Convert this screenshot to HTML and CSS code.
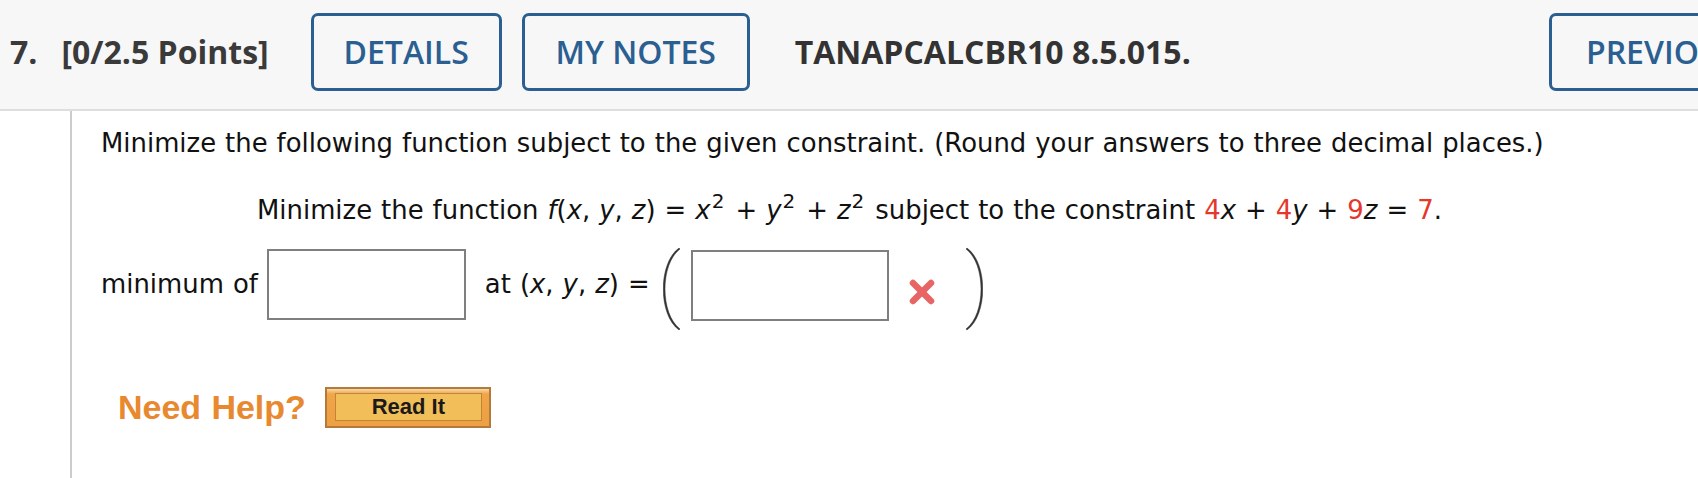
FILE: index.html
```html
<!DOCTYPE html>
<html lang="en">
<head>
<meta charset="utf-8">
<title>Question 7</title>
<link rel="stylesheet" href="styles.css">
</head>
<body>
<div class="page">
  <header class="qhead">
    <span class="qnum">7.</span>
    <span class="points">[0/2.5 Points]</span>
    <button class="hbtn btn-details">DETAILS</button>
    <button class="hbtn btn-notes">MY NOTES</button>
    <span class="qtitle">TANAPCALCBR10 8.5.015.</span>
    <button class="hbtn btn-prev">PREVIOUS ANSWERS</button>
  </header>
  <main class="qbody">
    <p class="intro">Minimize the following function subject to the given constraint. (Round your answers to three decimal places.)</p>
    <p class="problem">Minimize the function <i>f</i>(<i>x</i>, <i>y</i>, <i>z</i>) = <i>x</i><sup>2</sup> + <i>y</i><sup>2</sup> + <i>z</i><sup>2</sup> subject to the constraint <span class="red">4</span><i>x</i> + <span class="red">4</span><i>y</i> + <span class="red">9</span><i>z</i> = <span class="red">7</span>.</p>
    <div class="answers">
      <span class="lbl">minimum of</span>
      <input class="ans ans-min" type="text">
      <span class="lbl lbl-at">at (<i>x</i>, <i>y</i>, <i>z</i>) =</span>
      <svg class="paren" width="18" height="84" viewBox="0 0 18 84"><path d="M16 1 C -5 16 -5 68 16 83 L17 82 C -3 67 -3 17 17 2 Z" fill="#333333" stroke="#333333" stroke-width="0.5" stroke-linejoin="round"/></svg>
      <input class="ans ans-pt" type="text">
      <svg class="xmark" width="28" height="28" viewBox="0 0 28 28"><g stroke="#e65858" stroke-width="6.5" stroke-linecap="round" opacity="0.92"><line x1="5" y1="5" x2="23" y2="23"/><line x1="23" y1="5" x2="5" y2="23"/></g></svg>
      <svg class="paren paren-r" width="18" height="84" viewBox="0 0 18 84"><path d="M2 1 C 23 16 23 68 2 83 L1 82 C 21 67 21 17 1 2 Z" fill="#333333" stroke="#333333" stroke-width="0.5" stroke-linejoin="round"/></svg>
    </div>
    <div class="help">
      <span class="need">Need Help?</span>
      <button class="readit"><span class="readit-inner">Read It</span></button>
    </div>
  </main>
</div>
</body>
</html>
```
FILE: styles.css
```css
html, body {
  margin: 0;
  padding: 0;
  overflow: hidden;
  background: #ffffff;
}

.page {
  width: 1698px;
  height: 478px;
  overflow: hidden;
}

.qhead {
  box-sizing: border-box;
  display: flex;
  align-items: center;
  height: 111px;
  background: #f7f7f7;
  border-bottom: 2px solid #dedede;
  padding: 0 0 6px 10px;
  font-family: "Open Sans", "Liberation Sans", sans-serif;
  white-space: nowrap;
}

.qnum {
  font-size: 32px;
  font-weight: 700;
  color: #3a3a3a;
}

.points {
  margin-left: 24px;
  font-size: 32px;
  font-weight: 700;
  color: #3a3a3a;
}

.hbtn {
  flex-shrink: 0;
  box-sizing: border-box;
  height: 78px;
  padding: 0 28px;
  background: #f7f7f7;
  border: 3px solid #2b5f92;
  border-radius: 7px;
  color: #2b5f92;
  font-family: "Open Sans", "Liberation Sans", sans-serif;
  font-size: 32px;
  font-weight: 600;
  margin: 0;
}

.btn-details {
  margin-left: 42px;
  width: 191px;
}

.btn-notes {
  margin-left: 20px;
  width: 228px;
}

.qtitle {
  margin-left: 45px;
  font-size: 32px;
  font-weight: 700;
  color: #333333;
}

.btn-prev {
  margin-left: auto;
  width: 260px;
  text-align: left;
  padding-left: 34px;
  margin-right: -111px;
}

.qbody {
  box-sizing: border-box;
  height: 367px;
  margin-left: 70px;
  border-left: 2px solid #cccccc;
  padding: 17px 0 0 29px;
  font-family: "DejaVu Sans", Verdana, sans-serif;
  font-size: 25.9px;
  word-spacing: 0.8px;
  color: #111111;
}

.intro {
  margin: 0;
  line-height: 30px;
  white-space: nowrap;
}

.problem {
  margin: 37px 0 0 156px;
  line-height: 30px;
  white-space: nowrap;
}

.problem sup {
  font-size: 20px;
  line-height: 0;
  vertical-align: 0;
  position: relative;
  top: -11px;
  margin: 0 2px 0 1px;
}

.red {
  color: #e5372a;
}

.answers {
  display: flex;
  align-items: flex-start;
  margin-top: 24px;
  height: 84px;
}

.lbl {
  line-height: 30px;
  margin-top: 20px;
  white-space: nowrap;
}

.ans {
  box-sizing: border-box;
  height: 71px;
  border: 2px solid #7f7f7f;
  border-radius: 0;
  background: #ffffff;
  margin: 0;
  padding: 0;
}

.ans-min {
  width: 199px;
  margin-left: 9px;
}

.lbl-at {
  margin-left: 19px;
}

.paren {
  display: block;
  margin-left: 13px;
  margin-top: -2px;
}

.ans-pt {
  width: 198px;
  margin-left: 10px;
  margin-top: 1px;
}

.xmark {
  display: block;
  margin-left: 19px;
  margin-top: 29px;
}

.paren-r {
  margin-left: 29px;
}

.help {
  display: flex;
  align-items: center;
  margin-top: 54px;
  padding-left: 17px;
}

.need {
  font-family: "Liberation Sans", Arial, sans-serif;
  font-weight: 700;
  font-size: 34px;
  color: #e8892f;
}

.readit {
  margin-left: 19px;
  box-sizing: border-box;
  width: 166px;
  height: 41px;
  padding: 4px 7px 5px 8px;
  border: 2px solid #b27a3c;
  background: linear-gradient(#f8d9a6 0, #f0a548 5px, #eea042 100%);
  display: flex;
}

.readit-inner {
  flex: 1;
  display: flex;
  align-items: center;
  justify-content: center;
  border: 1.5px solid #c08538;
  background: #f2be5a;
  font-family: "Liberation Sans", Arial, sans-serif;
  font-weight: 700;
  font-size: 22px;
  color: #1a1a1a;
}
```
